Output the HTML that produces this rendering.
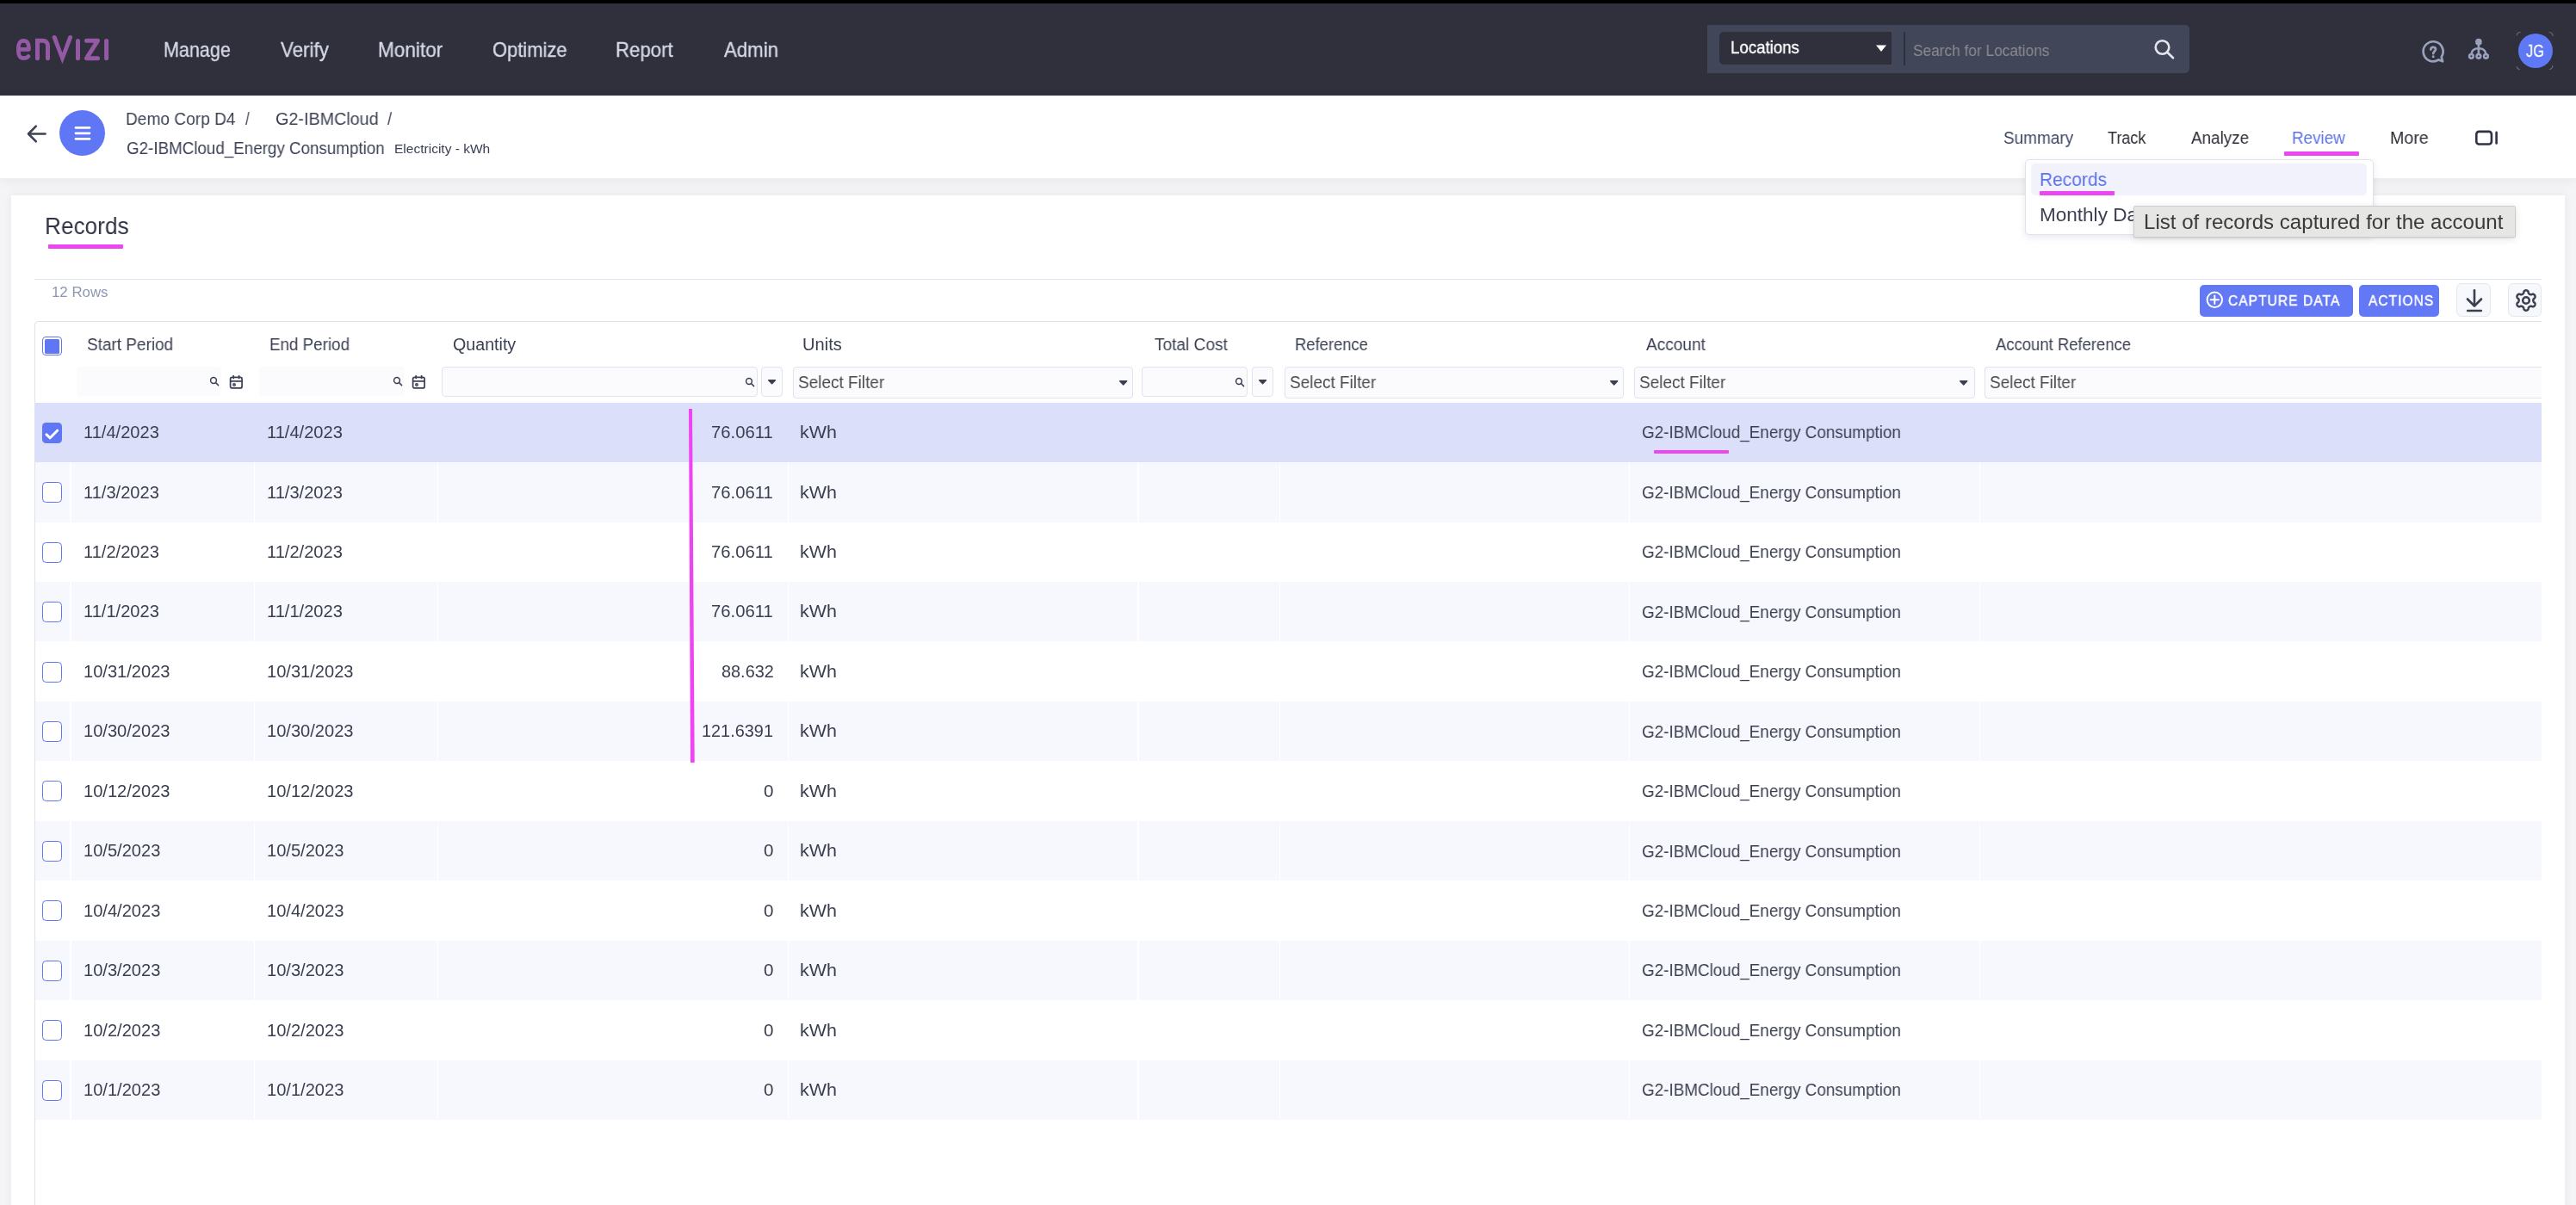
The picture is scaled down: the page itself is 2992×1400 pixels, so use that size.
<!DOCTYPE html>
<html><head><meta charset="utf-8"><title>Records</title>
<style>
html,body{margin:0;padding:0;}
body{width:2992px;height:1400px;overflow:hidden;position:relative;background:#f4f4f6;font-family:"Liberation Sans", sans-serif;}
.t{position:absolute;white-space:nowrap;will-change:transform;transform-origin:0 0;}
</style></head><body>
<div style="position:absolute;left:0.00px;top:0.00px;width:2992.00px;height:4.00px;background:#000"></div>
<div style="position:absolute;left:0.00px;top:4.00px;width:2992.00px;height:107.00px;background:#2f303c"></div>
<div style="position:absolute;left:0.00px;top:111.00px;width:2992.00px;height:96.00px;background:#fff;box-shadow:0 3px 14px rgba(30,30,60,0.055)"></div>
<div style="position:absolute;left:13.00px;top:227.00px;width:2966.00px;height:1273.00px;background:#fff;box-shadow:0 0 10px rgba(0,0,0,0.06)"></div>
<svg style="position:absolute;left:0;top:0" width="140" height="111" viewBox="0 0 140 111">
<g fill="none" stroke="#9459a5" stroke-width="5" stroke-linecap="round" stroke-linejoin="round">
<path d="M21.3,57.3 H33.5 C33.5,49.8 31.6,47.3 27.4,47.3 C23.2,47.3 21.3,49.8 21.3,57.5 C21.3,65.2 23.2,67.7 27.4,67.7 C30.2,67.7 31.9,66.8 33,65.4" stroke-width="4.7"/>
<path d="M43.5,67.7 V47.3 H49.8 C53.3,47.3 55.5,49.5 55.5,53.5 V67.7" stroke-linejoin="miter"/>
<path d="M90.5,47.5 V67.7"/>
<path d="M100.5,47.3 H113.5 L100.5,67.7 H113.5"/>
<path d="M123.6,47.5 V67.7"/>
</g>
<path d="M60.6,43.6 A2.6,2.6 0 0 1 65.6,42.6 L72.4,61.6 L79.2,42.6 A2.6,2.6 0 0 1 84.2,43.6 L72.4,74.3 Z" fill="#9459a5"/>
</svg>
<div class="t" style="left:189.78px;top:45px;font-size:23.2px;line-height:26px;color:#d6d9e8;transform:scaleX(0.9285);-webkit-text-stroke:0.35px #d6d9e8;">Manage</div>
<div class="t" style="left:325.89px;top:45px;font-size:23.2px;line-height:26px;color:#d6d9e8;transform:scaleX(0.9616);-webkit-text-stroke:0.35px #d6d9e8;">Verify</div>
<div class="t" style="left:438.79px;top:45px;font-size:23.2px;line-height:26px;color:#d6d9e8;transform:scaleX(0.9734);-webkit-text-stroke:0.35px #d6d9e8;">Monitor</div>
<div class="t" style="left:572.01px;top:45px;font-size:23.2px;line-height:26px;color:#d6d9e8;transform:scaleX(0.9467);-webkit-text-stroke:0.35px #d6d9e8;">Optimize</div>
<div class="t" style="left:715.23px;top:45px;font-size:23.2px;line-height:26px;color:#d6d9e8;transform:scaleX(0.9562);-webkit-text-stroke:0.35px #d6d9e8;">Report</div>
<div class="t" style="left:841.00px;top:45px;font-size:23.2px;line-height:26px;color:#d6d9e8;transform:scaleX(0.9595);-webkit-text-stroke:0.35px #d6d9e8;">Admin</div>
<div style="position:absolute;left:1983.00px;top:29.00px;width:560.00px;height:56.00px;background:#424659;border-radius:0 5px 5px 0"></div>
<div style="position:absolute;left:1997.00px;top:37.00px;width:200.00px;height:38.00px;background:#2f303c;border-radius:5px 0 0 5px"></div>
<div class="t" style="left:2009.51px;top:43px;font-size:20.6px;line-height:23px;color:#ffffff;transform:scaleX(0.9054);-webkit-text-stroke:0.35px #ffffff;">Locations</div>
<svg style="position:absolute;left:2177px;top:51px" width="16" height="11"><path d="M2,1.6 H14 L8,9 Z" fill="#fff"/></svg>
<div style="position:absolute;left:2210.50px;top:37.00px;width:2.50px;height:39.00px;background:#2f303c"></div>
<div class="t" style="left:2222.22px;top:48px;font-size:18.75px;line-height:21px;color:#8b8c8f;transform:scaleX(0.9212);">Search for Locations</div>
<svg style="position:absolute;left:2498px;top:42px" width="32" height="30"><g fill="none" stroke="#e4e6ee" stroke-width="2.6" stroke-linecap="round"><circle cx="13.5" cy="13" r="7.8"/><path d="M19.3,18.8 L26,25.3"/></g></svg>
<svg style="position:absolute;left:2808px;top:42px" width="36" height="36" viewBox="0 0 36 36">
<g fill="none" stroke="#97a0bd" stroke-width="2.7" stroke-linecap="round" stroke-linejoin="round">
<path d="M27.69,24.15 A11.5,11.5 0 1 0 24.41,27.41 L29.1,29.3 Z"/>
<path d="M15.3,15.6 C15.3,13.7 16.6,12.8 18.2,12.8 C19.8,12.8 21,13.8 21,15.2 C21,17.3 18.2,17.6 18.2,20.2"/>
</g><circle cx="18.2" cy="23.7" r="1.55" fill="#97a0bd"/></svg>
<svg style="position:absolute;left:2862px;top:40px" width="36" height="36" viewBox="0 0 36 36">
<g fill="none" stroke="#97a0bd" stroke-width="2.6" stroke-linecap="round">
<path d="M16.9,9 V23"/>
<path d="M8.4,22.8 C9,18 12.5,16.2 16.9,16.2 C21.3,16.2 24.8,18 25.4,22.8"/>
<circle cx="8.4" cy="25.3" r="2.35"/><circle cx="16.9" cy="25.3" r="2.35"/><circle cx="25.4" cy="25.3" r="2.35"/>
</g><circle cx="16.9" cy="8.7" r="3.85" fill="#97a0bd"/></svg>
<div style="position:absolute;left:2925px;top:39px;width:40px;height:40px;border-radius:50%;background:#5f78f6"></div>
<svg style="position:absolute;left:2918px;top:33px" width="52" height="52"><g fill="none" stroke="#9a9ca6" stroke-width="1.1" stroke-linecap="round" opacity="0.55"><path d="M5.3,7.8 A4,4 0 0 1 9.2,4.5"/><path d="M43.1,4.5 A4,4 0 0 1 47,8.8"/><path d="M5.3,44.5 A4,4 0 0 0 8.5,47.7"/><path d="M43.5,47.5 A4,4 0 0 0 46.8,43.5"/></g></svg>
<div class="t" style="left:2933.75px;top:48px;font-size:20.3px;line-height:22px;color:#ffffff;transform:scaleX(0.8055);-webkit-text-stroke:0.3px #ffffff;">JG</div>
<svg style="position:absolute;left:28px;top:142px" width="30" height="28"><g fill="none" stroke="#3d4254" stroke-width="2.6" stroke-linecap="round" stroke-linejoin="round"><path d="M5.5,13.5 H24.5"/><path d="M13.8,4.6 L5,13.5 L13.8,22.4"/></g></svg>
<div style="position:absolute;left:69px;top:128px;width:53px;height:53px;border-radius:50%;background:#5f77f5"></div>
<svg style="position:absolute;left:80px;top:140px" width="32" height="30"><g stroke="#fff" stroke-width="2.7" stroke-linecap="round"><path d="M8,8.4 H24"/><path d="M8,14.8 H24"/><path d="M8,21.4 H24"/></g></svg>
<div class="t" style="left:145.97px;top:127px;font-size:19.9px;line-height:22px;color:#3b4054;transform:scaleX(0.9614);">Demo Corp D4</div>
<div class="t" style="left:284.70px;top:127px;font-size:19.9px;line-height:22px;color:#3b4054;transform:scaleX(0.8615);">/</div>
<div class="t" style="left:320.01px;top:127px;font-size:19.9px;line-height:22px;color:#3b4054;transform:scaleX(0.9932);">G2-IBMCloud</div>
<div class="t" style="left:449.60px;top:127px;font-size:19.9px;line-height:22px;color:#3b4054;transform:scaleX(0.9153);">/</div>
<div class="t" style="left:146.86px;top:161px;font-size:19.9px;line-height:22px;color:#3b4054;transform:scaleX(0.9444);">G2-IBMCloud_Energy Consumption</div>
<div class="t" style="left:458.16px;top:164px;font-size:15.3px;line-height:17px;color:#3b4054;transform:scaleX(1.0148);">Electricity - kWh</div>
<div class="t" style="left:2326.85px;top:149px;font-size:19.9px;line-height:22px;color:#3d4563;transform:scaleX(0.9528);">Summary</div>
<div class="t" style="left:2447.94px;top:149px;font-size:19.9px;line-height:22px;color:#2a2b33;transform:scaleX(0.9064);">Track</div>
<div class="t" style="left:2544.90px;top:149px;font-size:19.9px;line-height:22px;color:#2a2b33;transform:scaleX(0.9478);">Analyze</div>
<div class="t" style="left:2662.49px;top:149px;font-size:19.9px;line-height:22px;color:#5a72eb;transform:scaleX(0.9485);">Review</div>
<div class="t" style="left:2776.03px;top:149px;font-size:19.9px;line-height:22px;color:#2a2b33;transform:scaleX(0.9863);">More</div>
<div style="position:absolute;left:2652.70px;top:176.40px;width:87.10px;height:4.40px;background:#ec45f2;border-radius:1px"></div>
<svg style="position:absolute;left:2870px;top:146px" width="36" height="28"><g fill="none" stroke="#2f3344" stroke-width="2.6" stroke-linecap="round" stroke-linejoin="round"><rect x="6.3" y="6.9" width="17.6" height="14.6" rx="3"/><path d="M29.6,7.9 V20.5"/></g></svg>
<div class="t" style="left:52.10px;top:247px;font-size:27.9px;line-height:31px;color:#2f3446;transform:scaleX(0.9392);">Records</div>
<div style="position:absolute;left:55.70px;top:284.00px;width:87.10px;height:5.00px;background:#ec45f2;border-radius:1px"></div>
<div style="position:absolute;left:40.20px;top:324.00px;width:2911.60px;height:1.20px;background:#dfe2f0"></div>
<div class="t" style="left:59.74px;top:330px;font-size:16.3px;line-height:18px;color:#8d97b2;transform:scaleX(1.0339);">12 Rows</div>
<div style="position:absolute;left:2555.00px;top:331.00px;width:177.70px;height:36.70px;background:#6278f5;border-radius:5px"></div>
<svg style="position:absolute;left:2560px;top:336px" width="25" height="25"><g fill="none" stroke="#fff" stroke-width="2" stroke-linecap="round"><circle cx="12.3" cy="12.3" r="8.7"/><path d="M12.3,7.6 V17"/><path d="M7.6,12.3 H17"/></g></svg>
<div class="t" style="left:2588.43px;top:340px;font-size:16.7px;line-height:19px;color:#ffffff;transform:scaleX(0.9263);letter-spacing:1.2px;-webkit-text-stroke:0.5px #ffffff;">CAPTURE DATA</div>
<div style="position:absolute;left:2740.20px;top:331.00px;width:92.50px;height:36.70px;background:#6278f5;border-radius:5px"></div>
<div class="t" style="left:2750.60px;top:340px;font-size:16.7px;line-height:19px;color:#ffffff;transform:scaleX(0.9239);letter-spacing:1.2px;-webkit-text-stroke:0.5px #ffffff;">ACTIONS</div>
<div style="position:absolute;left:2853.40px;top:329.20px;width:39.20px;height:39.30px;background:#f7f8fc;border:1px solid #e4e7f0;border-radius:6px;box-sizing:border-box"></div>
<svg style="position:absolute;left:2860px;top:332px" width="28" height="34"><g fill="none" stroke="#3a3f52" stroke-width="2.6" stroke-linecap="round" stroke-linejoin="round"><path d="M14,5.3 V23"/><path d="M6,15.5 L14,23.5 L22,15.5"/><path d="M6.2,29 H21.8"/></g></svg>
<div style="position:absolute;left:2913.30px;top:329.20px;width:38.50px;height:39.30px;background:#f7f8fc;border:1px solid #e4e7f0;border-radius:6px;box-sizing:border-box"></div>
<svg style="position:absolute;left:2919px;top:334px" width="30" height="30" viewBox="0 0 30 30"><g fill="none" stroke="#3a3f52" stroke-width="2.5" stroke-linejoin="round"><path d="M23.30,15.00 L23.31,15.22 L23.33,15.44 L23.38,15.66 L23.44,15.89 L23.52,16.12 L23.62,16.37 L23.75,16.62 L23.91,16.89 L24.13,17.19 L24.66,17.59 L25.18,18.01 L25.36,18.37 L25.46,18.71 L25.52,19.04 L25.54,19.36 L25.52,19.68 L25.47,19.99 L25.38,20.29 L25.27,20.58 L25.13,20.85 L24.97,21.11 L24.77,21.35 L24.56,21.57 L24.31,21.77 L24.05,21.94 L23.76,22.09 L23.44,22.21 L23.09,22.29 L22.70,22.31 L22.07,22.07 L21.46,21.81 L21.10,21.77 L20.78,21.77 L20.49,21.79 L20.23,21.82 L19.99,21.87 L19.76,21.93 L19.55,22.00 L19.34,22.09 L19.15,22.19 L18.97,22.30 L18.79,22.44 L18.62,22.59 L18.45,22.75 L18.29,22.94 L18.13,23.15 L17.97,23.39 L17.81,23.66 L17.67,24.00 L17.59,24.66 L17.48,25.32 L17.26,25.65 L17.02,25.92 L16.76,26.13 L16.49,26.31 L16.20,26.45 L15.91,26.56 L15.61,26.64 L15.31,26.68 L15.00,26.70 L14.69,26.68 L14.39,26.64 L14.09,26.56 L13.80,26.45 L13.51,26.31 L13.24,26.13 L12.98,25.92 L12.74,25.65 L12.52,25.32 L12.41,24.66 L12.33,24.00 L12.19,23.66 L12.03,23.39 L11.87,23.15 L11.71,22.94 L11.55,22.75 L11.38,22.59 L11.21,22.44 L11.03,22.30 L10.85,22.19 L10.66,22.09 L10.45,22.00 L10.24,21.93 L10.01,21.87 L9.77,21.82 L9.51,21.79 L9.22,21.77 L8.90,21.77 L8.54,21.81 L7.93,22.07 L7.30,22.31 L6.91,22.29 L6.56,22.21 L6.24,22.09 L5.95,21.94 L5.69,21.77 L5.44,21.57 L5.23,21.35 L5.03,21.11 L4.87,20.85 L4.73,20.58 L4.62,20.29 L4.53,19.99 L4.48,19.68 L4.46,19.36 L4.48,19.04 L4.54,18.71 L4.64,18.37 L4.82,18.01 L5.34,17.59 L5.87,17.19 L6.09,16.89 L6.25,16.62 L6.38,16.37 L6.48,16.12 L6.56,15.89 L6.62,15.66 L6.67,15.44 L6.69,15.22 L6.70,15.00 L6.69,14.78 L6.67,14.56 L6.62,14.34 L6.56,14.11 L6.48,13.88 L6.38,13.63 L6.25,13.38 L6.09,13.11 L5.87,12.81 L5.34,12.41 L4.82,11.99 L4.64,11.63 L4.54,11.29 L4.48,10.96 L4.46,10.64 L4.48,10.32 L4.53,10.01 L4.62,9.71 L4.73,9.42 L4.87,9.15 L5.03,8.89 L5.23,8.65 L5.44,8.43 L5.69,8.23 L5.95,8.06 L6.24,7.91 L6.56,7.79 L6.91,7.71 L7.30,7.69 L7.93,7.93 L8.54,8.19 L8.90,8.23 L9.22,8.23 L9.51,8.21 L9.77,8.18 L10.01,8.13 L10.24,8.07 L10.45,8.00 L10.66,7.91 L10.85,7.81 L11.03,7.70 L11.21,7.56 L11.38,7.41 L11.55,7.25 L11.71,7.06 L11.87,6.85 L12.03,6.61 L12.19,6.34 L12.33,6.00 L12.41,5.34 L12.52,4.68 L12.74,4.35 L12.98,4.08 L13.24,3.87 L13.51,3.69 L13.80,3.55 L14.09,3.44 L14.39,3.36 L14.69,3.32 L15.00,3.30 L15.31,3.32 L15.61,3.36 L15.91,3.44 L16.20,3.55 L16.49,3.69 L16.76,3.87 L17.02,4.08 L17.26,4.35 L17.48,4.68 L17.59,5.34 L17.67,6.00 L17.81,6.34 L17.97,6.61 L18.13,6.85 L18.29,7.06 L18.45,7.25 L18.62,7.41 L18.79,7.56 L18.97,7.70 L19.15,7.81 L19.34,7.91 L19.55,8.00 L19.76,8.07 L19.99,8.13 L20.23,8.18 L20.49,8.21 L20.78,8.23 L21.10,8.23 L21.46,8.19 L22.07,7.93 L22.70,7.69 L23.09,7.71 L23.44,7.79 L23.76,7.91 L24.05,8.06 L24.31,8.23 L24.56,8.43 L24.77,8.65 L24.97,8.89 L25.13,9.15 L25.27,9.42 L25.38,9.71 L25.47,10.01 L25.52,10.32 L25.54,10.64 L25.52,10.96 L25.46,11.29 L25.36,11.63 L25.18,11.99 L24.66,12.41 L24.13,12.81 L23.91,13.11 L23.75,13.38 L23.62,13.63 L23.52,13.88 L23.44,14.11 L23.38,14.34 L23.33,14.56 L23.31,14.78 Z"/><circle cx="15" cy="15" r="3.8" stroke-width="2.6"/></g></svg>
<div style="position:absolute;left:40px;top:373px;width:2940px;height:1200px;border:1px solid #dde1ee;border-right:none;border-radius:5px 0 0 0;box-sizing:border-box;clip-path:inset(0 28px 0 0)"></div>
<div style="position:absolute;left:49.30px;top:391.00px;width:22.50px;height:22.40px;border:1px solid #5f77f5;border-radius:4px;box-sizing:border-box;background:#fff"></div>
<div style="position:absolute;left:52.20px;top:393.80px;width:16.70px;height:16.80px;background:#5f77f5;border-radius:1.5px"></div>
<div class="t" style="left:100.65px;top:389px;font-size:19.5px;line-height:22px;color:#3a3f52;transform:scaleX(0.9731);">Start Period</div>
<div class="t" style="left:312.50px;top:389px;font-size:19.5px;line-height:22px;color:#3a3f52;transform:scaleX(0.9637);">End Period</div>
<div class="t" style="left:526.32px;top:389px;font-size:19.5px;line-height:22px;color:#3a3f52;transform:scaleX(1.0075);">Quantity</div>
<div class="t" style="left:932.29px;top:389px;font-size:19.5px;line-height:22px;color:#3a3f52;transform:scaleX(1.0304);">Units</div>
<div class="t" style="left:1340.62px;top:389px;font-size:19.5px;line-height:22px;color:#3a3f52;transform:scaleX(0.9792);">Total Cost</div>
<div class="t" style="left:1503.83px;top:389px;font-size:19.5px;line-height:22px;color:#3a3f52;transform:scaleX(0.9445);">Reference</div>
<div class="t" style="left:1911.50px;top:389px;font-size:19.5px;line-height:22px;color:#3a3f52;transform:scaleX(0.9773);">Account</div>
<div class="t" style="left:2318.20px;top:389px;font-size:19.5px;line-height:22px;color:#3a3f52;transform:scaleX(0.9468);">Account Reference</div>
<div style="position:absolute;left:88.70px;top:426.00px;width:168.30px;height:34.00px;background:#fbfbfd;border-radius:4px;box-sizing:border-box;"></div>
<svg style="position:absolute;left:240.0px;top:434.0px" width="18" height="18"><g fill="none" stroke="#3a3f52" stroke-width="1.5" stroke-linecap="round"><circle cx="8" cy="8" r="3.4"/><path d="M10.5,10.5 L13.6,13.6"/></g></svg>
<svg style="position:absolute;left:265.5px;top:435.5px" width="18" height="18"><g fill="none" stroke="#3a3f52" stroke-width="1.7" stroke-linejoin="round"><rect x="1.6" y="2.3" width="13.5" height="12.6" rx="2"/><path d="M1.6,6.9 H15.1"/><path d="M5.2,0.6 V3.4" stroke-linecap="round"/><path d="M11.6,0.6 V3.4" stroke-linecap="round"/><circle cx="6" cy="11" r="1.25" stroke-width="1.4"/></g></svg>
<div style="position:absolute;left:301.00px;top:426.00px;width:168.50px;height:34.00px;background:#fbfbfd;border-radius:4px;box-sizing:border-box;"></div>
<svg style="position:absolute;left:452.6px;top:434.0px" width="18" height="18"><g fill="none" stroke="#3a3f52" stroke-width="1.5" stroke-linecap="round"><circle cx="8" cy="8" r="3.4"/><path d="M10.5,10.5 L13.6,13.6"/></g></svg>
<svg style="position:absolute;left:478.0px;top:435.5px" width="18" height="18"><g fill="none" stroke="#3a3f52" stroke-width="1.7" stroke-linejoin="round"><rect x="1.6" y="2.3" width="13.5" height="12.6" rx="2"/><path d="M1.6,6.9 H15.1"/><path d="M5.2,0.6 V3.4" stroke-linecap="round"/><path d="M11.6,0.6 V3.4" stroke-linecap="round"/><circle cx="6" cy="11" r="1.25" stroke-width="1.4"/></g></svg>
<div style="position:absolute;left:513.20px;top:426.00px;width:366.80px;height:35.00px;background:#fbfbfd;border-radius:4px;box-sizing:border-box;border:1px solid #dfe3ee;"></div>
<svg style="position:absolute;left:861.6px;top:435.0px" width="18" height="18"><g fill="none" stroke="#3a3f52" stroke-width="1.5" stroke-linecap="round"><circle cx="8" cy="8" r="3.4"/><path d="M10.5,10.5 L13.6,13.6"/></g></svg>
<div style="position:absolute;left:884.30px;top:426.00px;width:25.10px;height:35.00px;background:#fbfbfd;border-radius:4px;box-sizing:border-box;border:1px solid #dfe3ee;"></div>
<svg style="position:absolute;left:891.2px;top:439.8px" width="11.2" height="7.4"><path d="M1.7,1.7 H9.50 L5.60,5.70 Z" fill="#3b3f54" stroke="#3b3f54" stroke-width="1.4" stroke-linejoin="round"/></svg>
<div style="position:absolute;left:921.20px;top:426.20px;width:394.80px;height:36.50px;background:#fbfbfd;border-radius:4px;box-sizing:border-box;border:1px solid #dfe3ee;"></div>
<div class="t" style="left:926.95px;top:433px;font-size:19.5px;line-height:22px;color:#4a4a4a;transform:scaleX(0.9735);">Select Filter</div>
<svg style="position:absolute;left:1298.5px;top:440.7px" width="11.4" height="7.8"><path d="M1.7,1.7 H9.70 L5.70,6.10 Z" fill="#3b3f54" stroke="#3b3f54" stroke-width="1.4" stroke-linejoin="round"/></svg>
<div style="position:absolute;left:1326.40px;top:426.00px;width:122.20px;height:35.00px;background:#fbfbfd;border-radius:4px;box-sizing:border-box;border:1px solid #dfe3ee;"></div>
<svg style="position:absolute;left:1431.0px;top:435.0px" width="18" height="18"><g fill="none" stroke="#3a3f52" stroke-width="1.5" stroke-linecap="round"><circle cx="8" cy="8" r="3.4"/><path d="M10.5,10.5 L13.6,13.6"/></g></svg>
<div style="position:absolute;left:1453.50px;top:426.00px;width:25.30px;height:35.00px;background:#fbfbfd;border-radius:4px;box-sizing:border-box;border:1px solid #dfe3ee;"></div>
<svg style="position:absolute;left:1460.6px;top:439.8px" width="11.2" height="7.4"><path d="M1.7,1.7 H9.50 L5.60,5.70 Z" fill="#3b3f54" stroke="#3b3f54" stroke-width="1.4" stroke-linejoin="round"/></svg>
<div style="position:absolute;left:1492.30px;top:426.20px;width:394.10px;height:36.50px;background:#fbfbfd;border-radius:4px;box-sizing:border-box;border:1px solid #dfe3ee;"></div>
<div class="t" style="left:1497.65px;top:433px;font-size:19.5px;line-height:22px;color:#4a4a4a;transform:scaleX(0.9735);">Select Filter</div>
<svg style="position:absolute;left:1868.5px;top:440.7px" width="11.4" height="7.8"><path d="M1.7,1.7 H9.70 L5.70,6.10 Z" fill="#3b3f54" stroke="#3b3f54" stroke-width="1.4" stroke-linejoin="round"/></svg>
<div style="position:absolute;left:1898.00px;top:426.20px;width:395.60px;height:36.50px;background:#fbfbfd;border-radius:4px;box-sizing:border-box;border:1px solid #dfe3ee;"></div>
<div class="t" style="left:1903.75px;top:433px;font-size:19.5px;line-height:22px;color:#4a4a4a;transform:scaleX(0.9735);">Select Filter</div>
<svg style="position:absolute;left:2275.3px;top:440.7px" width="11.4" height="7.8"><path d="M1.7,1.7 H9.70 L5.70,6.10 Z" fill="#3b3f54" stroke="#3b3f54" stroke-width="1.4" stroke-linejoin="round"/></svg>
<div style="position:absolute;left:2305.20px;top:426.20px;width:646.80px;height:36.50px;background:#fbfbfd;border-radius:4px;box-sizing:border-box;border:1px solid #dfe3ee;border-right:none;border-radius:4px 0 0 4px;"></div>
<div class="t" style="left:2310.85px;top:433px;font-size:19.5px;line-height:22px;color:#4a4a4a;transform:scaleX(0.9735);">Select Filter</div>
<div style="position:absolute;left:41.00px;top:467.70px;width:2910.50px;height:69.45px;background:#dcdff9"></div>
<div style="position:absolute;left:49.00px;top:491.00px;width:23.00px;height:24.00px;background:#5f77f5;border-radius:4.5px"></div>
<svg style="position:absolute;left:49px;top:491.00px" width="23" height="24"><path d="M5,13.8 L9.2,17.8 L17.6,9.2" fill="none" stroke="#fff" stroke-width="3" stroke-linecap="round" stroke-linejoin="round"/></svg>
<div class="t" style="left:97.09px;top:491px;font-size:19.9px;line-height:22px;color:#3a3f50;transform:scaleX(1.0100);">11/4/2023</div>
<div class="t" style="left:309.99px;top:491px;font-size:19.9px;line-height:22px;color:#3a3f50;transform:scaleX(1.0100);">11/4/2023</div>
<div class="t" style="left:826.49px;top:491px;font-size:19.9px;line-height:22px;color:#3a3f50;transform:scaleX(1.0182);">76.0611</div>
<div class="t" style="left:929.00px;top:491px;font-size:19.9px;line-height:22px;color:#3a3f50;transform:scaleX(1.0803);">kWh</div>
<div class="t" style="left:1906.66px;top:491px;font-size:19.9px;line-height:22px;color:#3a3f50;transform:scaleX(0.9482);">G2-IBMCloud_Energy Consumption</div>
<div style="position:absolute;left:41.00px;top:537.15px;width:2910.50px;height:69.45px;background:#f7f8fd"></div>
<div style="position:absolute;left:81.40px;top:537.15px;width:1.20px;height:69.45px;background:#ffffff"></div>
<div style="position:absolute;left:294.50px;top:537.15px;width:1.20px;height:69.45px;background:#ffffff"></div>
<div style="position:absolute;left:508.00px;top:537.15px;width:1.20px;height:69.45px;background:#ffffff"></div>
<div style="position:absolute;left:914.50px;top:537.15px;width:1.20px;height:69.45px;background:#ffffff"></div>
<div style="position:absolute;left:1321.40px;top:537.15px;width:1.20px;height:69.45px;background:#ffffff"></div>
<div style="position:absolute;left:1485.50px;top:537.15px;width:1.20px;height:69.45px;background:#ffffff"></div>
<div style="position:absolute;left:1892.20px;top:537.15px;width:1.20px;height:69.45px;background:#ffffff"></div>
<div style="position:absolute;left:2298.60px;top:537.15px;width:1.20px;height:69.45px;background:#ffffff"></div>
<div style="position:absolute;left:49.00px;top:560.15px;width:23.00px;height:24.00px;background:#fff;border:1.2px solid #5f77f5;border-radius:4.5px;box-sizing:border-box"></div>
<div class="t" style="left:97.09px;top:561px;font-size:19.9px;line-height:22px;color:#3a3f50;transform:scaleX(1.0100);">11/3/2023</div>
<div class="t" style="left:309.99px;top:561px;font-size:19.9px;line-height:22px;color:#3a3f50;transform:scaleX(1.0100);">11/3/2023</div>
<div class="t" style="left:826.49px;top:561px;font-size:19.9px;line-height:22px;color:#3a3f50;transform:scaleX(1.0182);">76.0611</div>
<div class="t" style="left:929.00px;top:561px;font-size:19.9px;line-height:22px;color:#3a3f50;transform:scaleX(1.0803);">kWh</div>
<div class="t" style="left:1906.66px;top:561px;font-size:19.9px;line-height:22px;color:#3a3f50;transform:scaleX(0.9482);">G2-IBMCloud_Energy Consumption</div>
<div style="position:absolute;left:49.00px;top:629.60px;width:23.00px;height:24.00px;background:#fff;border:1.2px solid #5f77f5;border-radius:4.5px;box-sizing:border-box"></div>
<div class="t" style="left:97.09px;top:630px;font-size:19.9px;line-height:22px;color:#3a3f50;transform:scaleX(1.0100);">11/2/2023</div>
<div class="t" style="left:309.99px;top:630px;font-size:19.9px;line-height:22px;color:#3a3f50;transform:scaleX(1.0100);">11/2/2023</div>
<div class="t" style="left:826.49px;top:630px;font-size:19.9px;line-height:22px;color:#3a3f50;transform:scaleX(1.0182);">76.0611</div>
<div class="t" style="left:929.00px;top:630px;font-size:19.9px;line-height:22px;color:#3a3f50;transform:scaleX(1.0803);">kWh</div>
<div class="t" style="left:1906.66px;top:630px;font-size:19.9px;line-height:22px;color:#3a3f50;transform:scaleX(0.9482);">G2-IBMCloud_Energy Consumption</div>
<div style="position:absolute;left:41.00px;top:676.05px;width:2910.50px;height:69.45px;background:#f7f8fd"></div>
<div style="position:absolute;left:81.40px;top:676.05px;width:1.20px;height:69.45px;background:#ffffff"></div>
<div style="position:absolute;left:294.50px;top:676.05px;width:1.20px;height:69.45px;background:#ffffff"></div>
<div style="position:absolute;left:508.00px;top:676.05px;width:1.20px;height:69.45px;background:#ffffff"></div>
<div style="position:absolute;left:914.50px;top:676.05px;width:1.20px;height:69.45px;background:#ffffff"></div>
<div style="position:absolute;left:1321.40px;top:676.05px;width:1.20px;height:69.45px;background:#ffffff"></div>
<div style="position:absolute;left:1485.50px;top:676.05px;width:1.20px;height:69.45px;background:#ffffff"></div>
<div style="position:absolute;left:1892.20px;top:676.05px;width:1.20px;height:69.45px;background:#ffffff"></div>
<div style="position:absolute;left:2298.60px;top:676.05px;width:1.20px;height:69.45px;background:#ffffff"></div>
<div style="position:absolute;left:49.00px;top:699.05px;width:23.00px;height:24.00px;background:#fff;border:1.2px solid #5f77f5;border-radius:4.5px;box-sizing:border-box"></div>
<div class="t" style="left:97.09px;top:699px;font-size:19.9px;line-height:22px;color:#3a3f50;transform:scaleX(1.0100);">11/1/2023</div>
<div class="t" style="left:309.99px;top:699px;font-size:19.9px;line-height:22px;color:#3a3f50;transform:scaleX(1.0100);">11/1/2023</div>
<div class="t" style="left:826.49px;top:699px;font-size:19.9px;line-height:22px;color:#3a3f50;transform:scaleX(1.0182);">76.0611</div>
<div class="t" style="left:929.00px;top:699px;font-size:19.9px;line-height:22px;color:#3a3f50;transform:scaleX(1.0803);">kWh</div>
<div class="t" style="left:1906.66px;top:700px;font-size:19.9px;line-height:22px;color:#3a3f50;transform:scaleX(0.9482);">G2-IBMCloud_Energy Consumption</div>
<div style="position:absolute;left:49.00px;top:768.50px;width:23.00px;height:24.00px;background:#fff;border:1.2px solid #5f77f5;border-radius:4.5px;box-sizing:border-box"></div>
<div class="t" style="left:97.09px;top:769px;font-size:19.9px;line-height:22px;color:#3a3f50;transform:scaleX(1.0100);">10/31/2023</div>
<div class="t" style="left:309.99px;top:769px;font-size:19.9px;line-height:22px;color:#3a3f50;transform:scaleX(1.0100);">10/31/2023</div>
<div class="t" style="left:837.51px;top:769px;font-size:19.9px;line-height:22px;color:#3a3f50;">88.632</div>
<div class="t" style="left:929.00px;top:769px;font-size:19.9px;line-height:22px;color:#3a3f50;transform:scaleX(1.0803);">kWh</div>
<div class="t" style="left:1906.66px;top:769px;font-size:19.9px;line-height:22px;color:#3a3f50;transform:scaleX(0.9482);">G2-IBMCloud_Energy Consumption</div>
<div style="position:absolute;left:41.00px;top:814.95px;width:2910.50px;height:69.45px;background:#f7f8fd"></div>
<div style="position:absolute;left:81.40px;top:814.95px;width:1.20px;height:69.45px;background:#ffffff"></div>
<div style="position:absolute;left:294.50px;top:814.95px;width:1.20px;height:69.45px;background:#ffffff"></div>
<div style="position:absolute;left:508.00px;top:814.95px;width:1.20px;height:69.45px;background:#ffffff"></div>
<div style="position:absolute;left:914.50px;top:814.95px;width:1.20px;height:69.45px;background:#ffffff"></div>
<div style="position:absolute;left:1321.40px;top:814.95px;width:1.20px;height:69.45px;background:#ffffff"></div>
<div style="position:absolute;left:1485.50px;top:814.95px;width:1.20px;height:69.45px;background:#ffffff"></div>
<div style="position:absolute;left:1892.20px;top:814.95px;width:1.20px;height:69.45px;background:#ffffff"></div>
<div style="position:absolute;left:2298.60px;top:814.95px;width:1.20px;height:69.45px;background:#ffffff"></div>
<div style="position:absolute;left:49.00px;top:837.95px;width:23.00px;height:24.00px;background:#fff;border:1.2px solid #5f77f5;border-radius:4.5px;box-sizing:border-box"></div>
<div class="t" style="left:97.09px;top:838px;font-size:19.9px;line-height:22px;color:#3a3f50;transform:scaleX(1.0100);">10/30/2023</div>
<div class="t" style="left:309.99px;top:838px;font-size:19.9px;line-height:22px;color:#3a3f50;transform:scaleX(1.0100);">10/30/2023</div>
<div class="t" style="left:815.41px;top:838px;font-size:19.9px;line-height:22px;color:#3a3f50;transform:scaleX(0.9976);">121.6391</div>
<div class="t" style="left:929.00px;top:838px;font-size:19.9px;line-height:22px;color:#3a3f50;transform:scaleX(1.0803);">kWh</div>
<div class="t" style="left:1906.66px;top:839px;font-size:19.9px;line-height:22px;color:#3a3f50;transform:scaleX(0.9482);">G2-IBMCloud_Energy Consumption</div>
<div style="position:absolute;left:49.00px;top:907.40px;width:23.00px;height:24.00px;background:#fff;border:1.2px solid #5f77f5;border-radius:4.5px;box-sizing:border-box"></div>
<div class="t" style="left:97.09px;top:908px;font-size:19.9px;line-height:22px;color:#3a3f50;transform:scaleX(1.0100);">10/12/2023</div>
<div class="t" style="left:309.99px;top:908px;font-size:19.9px;line-height:22px;color:#3a3f50;transform:scaleX(1.0100);">10/12/2023</div>
<div class="t" style="left:886.57px;top:908px;font-size:19.9px;line-height:22px;color:#3a3f50;transform:scaleX(1.0364);">0</div>
<div class="t" style="left:929.00px;top:908px;font-size:19.9px;line-height:22px;color:#3a3f50;transform:scaleX(1.0803);">kWh</div>
<div class="t" style="left:1906.66px;top:908px;font-size:19.9px;line-height:22px;color:#3a3f50;transform:scaleX(0.9482);">G2-IBMCloud_Energy Consumption</div>
<div style="position:absolute;left:41.00px;top:953.85px;width:2910.50px;height:69.45px;background:#f7f8fd"></div>
<div style="position:absolute;left:81.40px;top:953.85px;width:1.20px;height:69.45px;background:#ffffff"></div>
<div style="position:absolute;left:294.50px;top:953.85px;width:1.20px;height:69.45px;background:#ffffff"></div>
<div style="position:absolute;left:508.00px;top:953.85px;width:1.20px;height:69.45px;background:#ffffff"></div>
<div style="position:absolute;left:914.50px;top:953.85px;width:1.20px;height:69.45px;background:#ffffff"></div>
<div style="position:absolute;left:1321.40px;top:953.85px;width:1.20px;height:69.45px;background:#ffffff"></div>
<div style="position:absolute;left:1485.50px;top:953.85px;width:1.20px;height:69.45px;background:#ffffff"></div>
<div style="position:absolute;left:1892.20px;top:953.85px;width:1.20px;height:69.45px;background:#ffffff"></div>
<div style="position:absolute;left:2298.60px;top:953.85px;width:1.20px;height:69.45px;background:#ffffff"></div>
<div style="position:absolute;left:49.00px;top:976.85px;width:23.00px;height:24.00px;background:#fff;border:1.2px solid #5f77f5;border-radius:4.5px;box-sizing:border-box"></div>
<div class="t" style="left:97.09px;top:977px;font-size:19.9px;line-height:22px;color:#3a3f50;transform:scaleX(1.0100);">10/5/2023</div>
<div class="t" style="left:309.99px;top:977px;font-size:19.9px;line-height:22px;color:#3a3f50;transform:scaleX(1.0100);">10/5/2023</div>
<div class="t" style="left:886.57px;top:977px;font-size:19.9px;line-height:22px;color:#3a3f50;transform:scaleX(1.0364);">0</div>
<div class="t" style="left:929.00px;top:977px;font-size:19.9px;line-height:22px;color:#3a3f50;transform:scaleX(1.0803);">kWh</div>
<div class="t" style="left:1906.66px;top:978px;font-size:19.9px;line-height:22px;color:#3a3f50;transform:scaleX(0.9482);">G2-IBMCloud_Energy Consumption</div>
<div style="position:absolute;left:49.00px;top:1046.30px;width:23.00px;height:24.00px;background:#fff;border:1.2px solid #5f77f5;border-radius:4.5px;box-sizing:border-box"></div>
<div class="t" style="left:97.09px;top:1047px;font-size:19.9px;line-height:22px;color:#3a3f50;transform:scaleX(1.0100);">10/4/2023</div>
<div class="t" style="left:309.99px;top:1047px;font-size:19.9px;line-height:22px;color:#3a3f50;transform:scaleX(1.0100);">10/4/2023</div>
<div class="t" style="left:886.57px;top:1047px;font-size:19.9px;line-height:22px;color:#3a3f50;transform:scaleX(1.0364);">0</div>
<div class="t" style="left:929.00px;top:1047px;font-size:19.9px;line-height:22px;color:#3a3f50;transform:scaleX(1.0803);">kWh</div>
<div class="t" style="left:1906.66px;top:1047px;font-size:19.9px;line-height:22px;color:#3a3f50;transform:scaleX(0.9482);">G2-IBMCloud_Energy Consumption</div>
<div style="position:absolute;left:41.00px;top:1092.75px;width:2910.50px;height:69.45px;background:#f7f8fd"></div>
<div style="position:absolute;left:81.40px;top:1092.75px;width:1.20px;height:69.45px;background:#ffffff"></div>
<div style="position:absolute;left:294.50px;top:1092.75px;width:1.20px;height:69.45px;background:#ffffff"></div>
<div style="position:absolute;left:508.00px;top:1092.75px;width:1.20px;height:69.45px;background:#ffffff"></div>
<div style="position:absolute;left:914.50px;top:1092.75px;width:1.20px;height:69.45px;background:#ffffff"></div>
<div style="position:absolute;left:1321.40px;top:1092.75px;width:1.20px;height:69.45px;background:#ffffff"></div>
<div style="position:absolute;left:1485.50px;top:1092.75px;width:1.20px;height:69.45px;background:#ffffff"></div>
<div style="position:absolute;left:1892.20px;top:1092.75px;width:1.20px;height:69.45px;background:#ffffff"></div>
<div style="position:absolute;left:2298.60px;top:1092.75px;width:1.20px;height:69.45px;background:#ffffff"></div>
<div style="position:absolute;left:49.00px;top:1115.75px;width:23.00px;height:24.00px;background:#fff;border:1.2px solid #5f77f5;border-radius:4.5px;box-sizing:border-box"></div>
<div class="t" style="left:97.09px;top:1116px;font-size:19.9px;line-height:22px;color:#3a3f50;transform:scaleX(1.0100);">10/3/2023</div>
<div class="t" style="left:309.99px;top:1116px;font-size:19.9px;line-height:22px;color:#3a3f50;transform:scaleX(1.0100);">10/3/2023</div>
<div class="t" style="left:886.57px;top:1116px;font-size:19.9px;line-height:22px;color:#3a3f50;transform:scaleX(1.0364);">0</div>
<div class="t" style="left:929.00px;top:1116px;font-size:19.9px;line-height:22px;color:#3a3f50;transform:scaleX(1.0803);">kWh</div>
<div class="t" style="left:1906.66px;top:1116px;font-size:19.9px;line-height:22px;color:#3a3f50;transform:scaleX(0.9482);">G2-IBMCloud_Energy Consumption</div>
<div style="position:absolute;left:49.00px;top:1185.20px;width:23.00px;height:24.00px;background:#fff;border:1.2px solid #5f77f5;border-radius:4.5px;box-sizing:border-box"></div>
<div class="t" style="left:97.09px;top:1186px;font-size:19.9px;line-height:22px;color:#3a3f50;transform:scaleX(1.0100);">10/2/2023</div>
<div class="t" style="left:309.99px;top:1186px;font-size:19.9px;line-height:22px;color:#3a3f50;transform:scaleX(1.0100);">10/2/2023</div>
<div class="t" style="left:886.57px;top:1186px;font-size:19.9px;line-height:22px;color:#3a3f50;transform:scaleX(1.0364);">0</div>
<div class="t" style="left:929.00px;top:1186px;font-size:19.9px;line-height:22px;color:#3a3f50;transform:scaleX(1.0803);">kWh</div>
<div class="t" style="left:1906.66px;top:1186px;font-size:19.9px;line-height:22px;color:#3a3f50;transform:scaleX(0.9482);">G2-IBMCloud_Energy Consumption</div>
<div style="position:absolute;left:41.00px;top:1231.65px;width:2910.50px;height:69.45px;background:#f7f8fd"></div>
<div style="position:absolute;left:81.40px;top:1231.65px;width:1.20px;height:69.45px;background:#ffffff"></div>
<div style="position:absolute;left:294.50px;top:1231.65px;width:1.20px;height:69.45px;background:#ffffff"></div>
<div style="position:absolute;left:508.00px;top:1231.65px;width:1.20px;height:69.45px;background:#ffffff"></div>
<div style="position:absolute;left:914.50px;top:1231.65px;width:1.20px;height:69.45px;background:#ffffff"></div>
<div style="position:absolute;left:1321.40px;top:1231.65px;width:1.20px;height:69.45px;background:#ffffff"></div>
<div style="position:absolute;left:1485.50px;top:1231.65px;width:1.20px;height:69.45px;background:#ffffff"></div>
<div style="position:absolute;left:1892.20px;top:1231.65px;width:1.20px;height:69.45px;background:#ffffff"></div>
<div style="position:absolute;left:2298.60px;top:1231.65px;width:1.20px;height:69.45px;background:#ffffff"></div>
<div style="position:absolute;left:49.00px;top:1254.65px;width:23.00px;height:24.00px;background:#fff;border:1.2px solid #5f77f5;border-radius:4.5px;box-sizing:border-box"></div>
<div class="t" style="left:97.09px;top:1255px;font-size:19.9px;line-height:22px;color:#3a3f50;transform:scaleX(1.0100);">10/1/2023</div>
<div class="t" style="left:309.99px;top:1255px;font-size:19.9px;line-height:22px;color:#3a3f50;transform:scaleX(1.0100);">10/1/2023</div>
<div class="t" style="left:886.57px;top:1255px;font-size:19.9px;line-height:22px;color:#3a3f50;transform:scaleX(1.0364);">0</div>
<div class="t" style="left:929.00px;top:1255px;font-size:19.9px;line-height:22px;color:#3a3f50;transform:scaleX(1.0803);">kWh</div>
<div class="t" style="left:1906.66px;top:1255px;font-size:19.9px;line-height:22px;color:#3a3f50;transform:scaleX(0.9482);">G2-IBMCloud_Energy Consumption</div>
<div style="position:absolute;left:1921.00px;top:523.40px;width:87.30px;height:4.00px;background:#ec45f2;border-radius:1px"></div>
<svg style="position:absolute;left:795px;top:470px" width="20" height="422"><path d="M5,5 L9,5 L11.7,416 L7,416 Z" fill="#ee44f2"/></svg>
<div style="position:absolute;left:2351.5px;top:184.5px;width:405.7px;height:88.7px;background:#fff;border:1px solid #dfe1ef;border-radius:5px;box-sizing:border-box;box-shadow:0 3px 8px rgba(40,40,80,0.10)"></div>
<div style="position:absolute;left:2359.00px;top:190.30px;width:389.60px;height:36.30px;background:#f2f2fd;border-radius:5px"></div>
<div class="t" style="left:2369.02px;top:196px;font-size:22.2px;line-height:25px;color:#5a72eb;transform:scaleX(0.9446);">Records</div>
<div style="position:absolute;left:2369.20px;top:221.70px;width:87.00px;height:4.90px;background:#ec45f2;border-radius:1px"></div>
<div class="t" style="left:2368.90px;top:237px;font-size:22.2px;line-height:25px;color:#3b4054;transform:scaleX(1.0155);">Monthly Data</div>
<div style="position:absolute;left:2478px;top:239.4px;width:444.4px;height:36.6px;background:#e6e6e4;border:1px solid #cdcdcd;border-radius:2px;box-sizing:border-box;box-shadow:0 2px 10px rgba(0,0,0,0.10),0 1px 2px rgba(0,0,0,0.10)"></div>
<div class="t" style="left:2489.57px;top:245px;font-size:23.7px;line-height:26px;color:#3a3a3a;transform:scaleX(1.0160);">List of records captured for the account</div>
</body></html>
